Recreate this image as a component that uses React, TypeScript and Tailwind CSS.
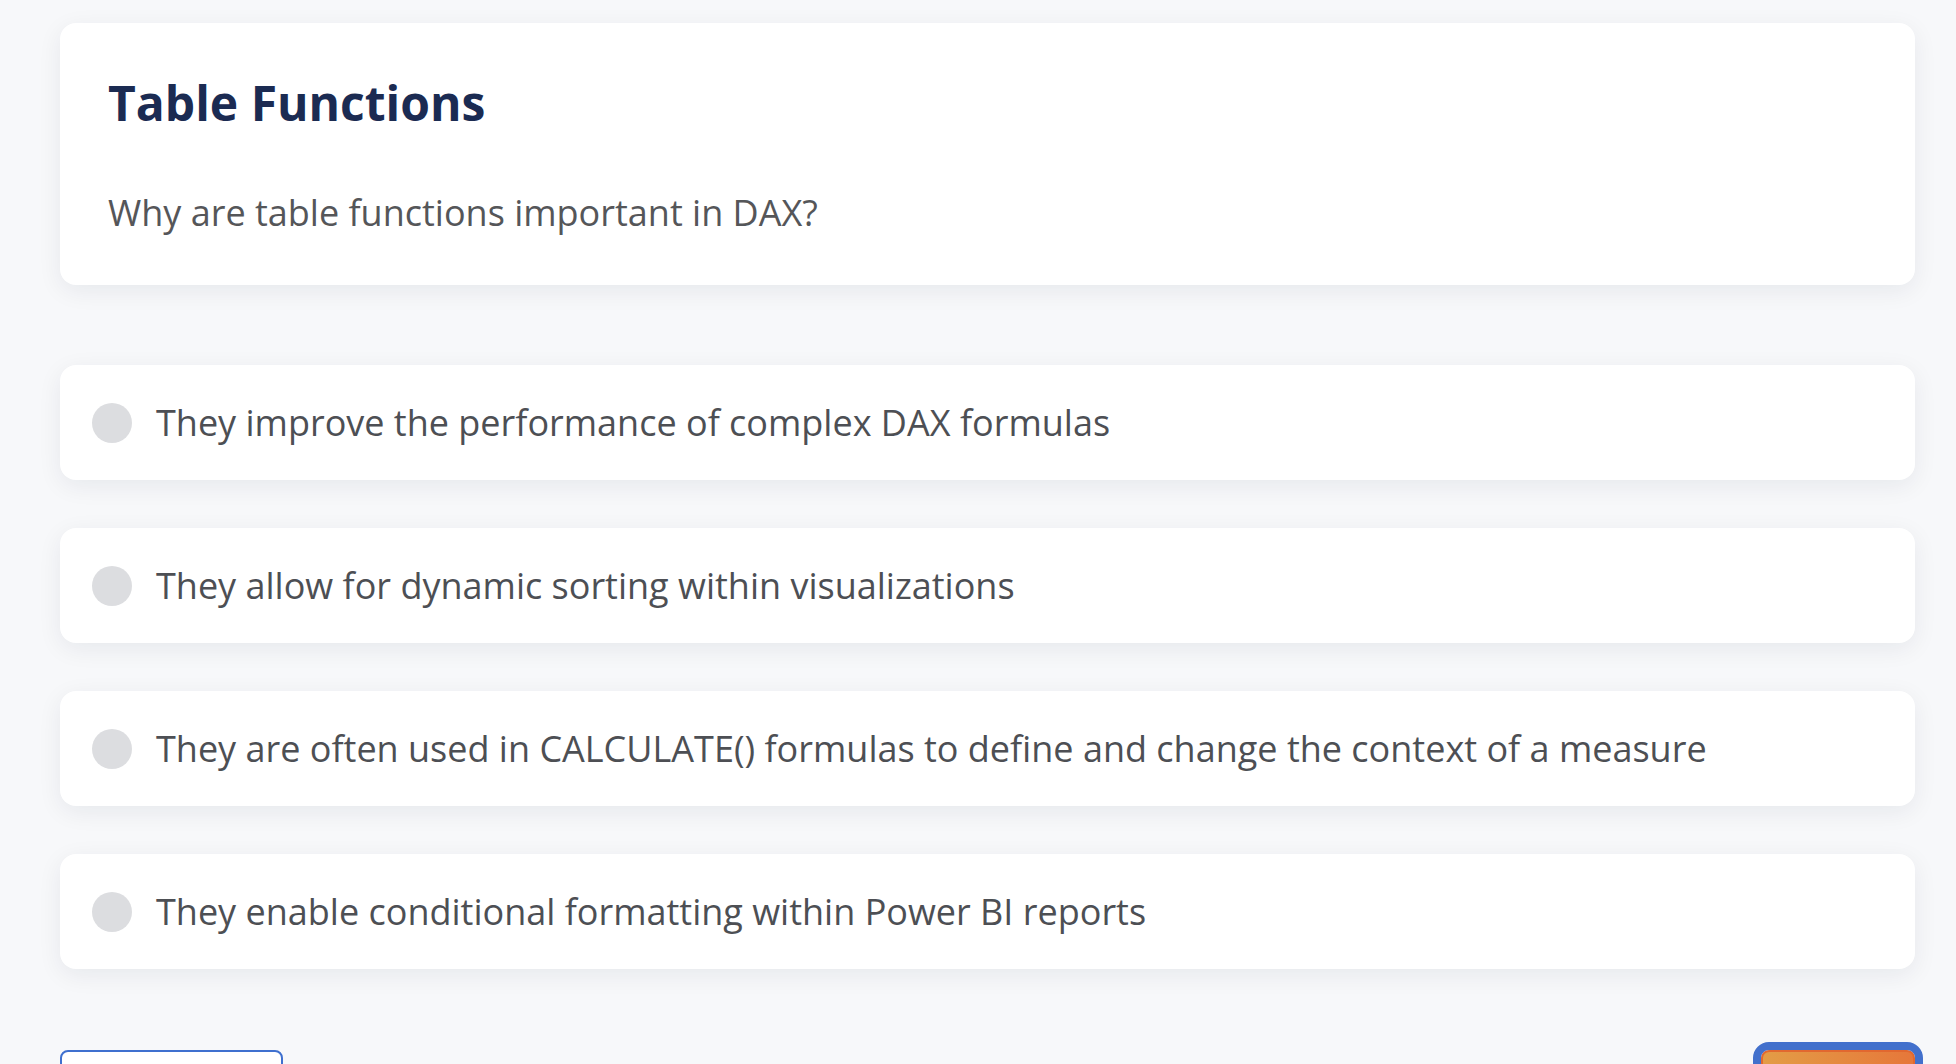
const options = [
  'They improve the performance of complex DAX formulas',
  'They allow for dynamic sorting within visualizations',
  'They are often used in CALCULATE() formulas to define and change the context of a measure',
  'They enable conditional formatting within Power BI reports',
];

export default function App() {
  return (
    <div className="min-h-screen bg-[#f7f8fa] pl-[60px] pr-[41px] pt-[23px] font-['Open_Sans',sans-serif] overflow-hidden h-[1064px]">
      {/* Question card */}
      <div className="bg-white rounded-2xl shadow-[0_6px_24px_rgba(20,30,50,0.07)] px-[48px] pt-[48px] pb-[47px]">
        <h2 className="text-[48px] leading-[64px] font-bold text-[#1b2b52]">Table Functions</h2>
        <p className="mt-[53px] text-[36px] leading-[50px] text-[#555659]">Why are table functions important in DAX?</p>
      </div>

      {/* Options */}
      <div className="mt-[80px] flex flex-col gap-[48px]">
        {options.map(opt => (
          <label
            key={opt}
            className="flex items-center gap-[24px] h-[115px] px-[32px] bg-white rounded-2xl shadow-[0_6px_24px_rgba(20,30,50,0.07)] cursor-pointer"
          >
            <span className="w-[40px] h-[40px] rounded-full bg-[#dcdde0] shrink-0" />
            <span className="text-[36px] leading-[50px] text-[#4d4f54]">{opt}</span>
          </label>
        ))}
      </div>

      {/* Footer buttons */}
      <div className="mt-[81px] flex items-start justify-between">
        <button className="w-[223px] h-[64px] rounded-lg border-2 border-[#3f70cf] bg-white" />
        <button className="w-[154px] h-[64px] rounded-lg border-2 border-[#e2682f] bg-gradient-to-r from-[#e39c46] to-[#e6773a] outline-[8px] outline-solid outline-[#4270cc]" />
      </div>
    </div>
  );
}
